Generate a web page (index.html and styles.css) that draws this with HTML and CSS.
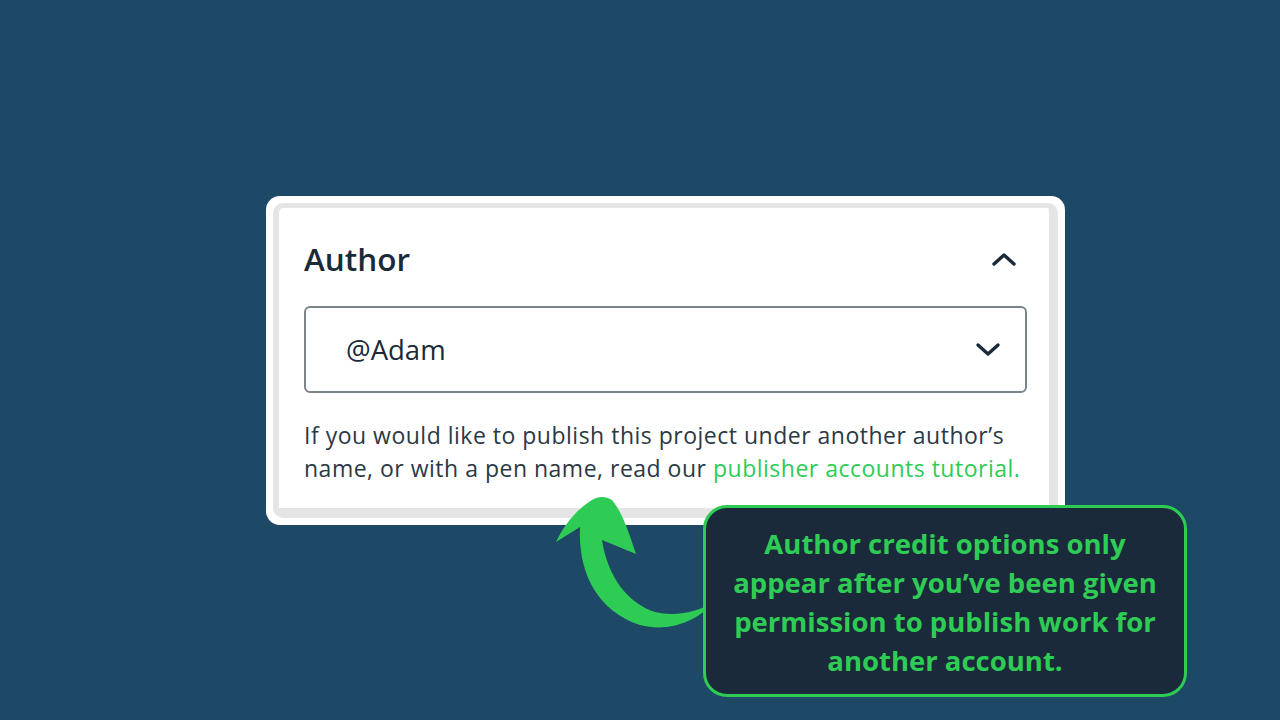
FILE: index.html
```html
<!DOCTYPE html>
<html>
<head>
<meta charset="utf-8">
<link rel="stylesheet" href="styles.css">
</head>
<body>
<div class="stage">
  <div class="card">
    <div class="panel">
      <div class="head">
        <h2 class="title">Author</h2>
        <svg class="chev-up" width="26" height="16" viewBox="0 0 26 16"><path d="M3 13 L13 4 L23 13" fill="none" stroke="#1b2a38" stroke-width="3.4" stroke-linecap="round" stroke-linejoin="round"/></svg>
      </div>
      <div class="select">
        <span class="value">@Adam</span>
        <svg class="chev-down" width="26" height="16" viewBox="0 0 26 16"><path d="M3 3 L13 12 L23 3" fill="none" stroke="#1b2a38" stroke-width="3.4" stroke-linecap="round" stroke-linejoin="round"/></svg>
      </div>
      <p class="help">If you would like to publish this project under another author’s name, or with a pen name, read our <a class="link">publisher accounts tutorial.</a></p>
    </div>
  </div>
  <svg class="arrow" width="1280" height="720" viewBox="0 0 1280 720"><path d="M592,500 C576,510 564,525 556,542 L580,527 C578,570 595,610 640,625 C670,633 700,620 714,601 C700,612 675,617 655,612 C628,603 608,578 602,540 L636,554 C628,530 622,512 612,500 C606,496 598,496 592,500 Z" fill="#2ecc55"/></svg>
  <div class="callout">Author credit options only appear after you’ve been given permission to publish work for another account.</div>
</div>
</body>
</html>
```
FILE: styles.css
```css
html, body {
  margin: 0;
  padding: 0;
  background: #1d4866;
}
.stage {
  position: relative;
  width: 1280px;
  height: 720px;
  padding: 196px 0 0 266px;
  box-sizing: border-box;
  font-family: "Open Sans", "Noto Sans", sans-serif;
}
.card {
  width: 799px;
  height: 329px;
  box-sizing: border-box;
  background: #ffffff;
  border-radius: 14px;
  padding: 7px;
}
.panel {
  height: 100%;
  box-sizing: border-box;
  background: #ffffff;
  border-style: solid;
  border-color: #e5e5e5;
  border-width: 5px 9px 10px 6px;
  border-radius: 10px;
  padding: 31px 22px 0 25px;
}
.head {
  display: flex;
  align-items: center;
  justify-content: space-between;
  height: 40px;
  padding-right: 10px;
}
.title {
  margin: 0;
  font-size: 31.5px;
  font-weight: 600;
  color: #1b2a38;
  line-height: 40px;
}
.select {
  margin-top: 27px;
  height: 87px;
  box-sizing: border-box;
  border: 2px solid #7b8489;
  border-radius: 6px;
  display: flex;
  align-items: center;
  justify-content: space-between;
  padding: 0 24px 0 40px;
}
.value {
  font-size: 27.5px;
  color: #1b2a38;
}
.help {
  margin: 26px 0 0 0;
  font-size: 23px;
  letter-spacing: 0.5px;
  line-height: 33px;
  color: #2b3946;
}
.link {
  color: #2ecc55;
}
.arrow {
  position: absolute;
  left: 0;
  top: 0;
}
.callout {
  position: absolute;
  left: 703px;
  top: 505px;
  width: 484px;
  height: 192px;
  box-sizing: border-box;
  border: 3px solid #2ecc55;
  border-radius: 24px;
  background: #1b2a3a;
  color: #2ecc55;
  font-weight: 700;
  font-size: 27.5px;
  line-height: 39px;
  text-align: center;
  padding: 16px 16px 0 16px;
}
```
